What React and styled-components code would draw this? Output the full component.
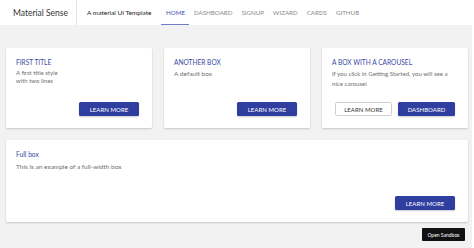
import React from "react";
import styled, { createGlobalStyle } from "styled-components";

const Global = createGlobalStyle`
  html, body { margin: 0; padding: 0; background: #ffffff; }
  body { font-family: Lato, "Open Sans", "Liberation Sans", sans-serif; -webkit-font-smoothing: antialiased; }
  * { box-sizing: border-box; }
`;

const Page = styled.div`
  width: 474px;
  height: 248px;
  display: flex;
  flex-direction: column;
  overflow: hidden;
`;

const Header = styled.header`
  height: 25px;
  flex: none;
  display: flex;
  align-items: stretch;
  background: #fff;
`;

const Brand = styled.div`
  width: 77px;
  padding-left: 13px;
  display: flex;
  align-items: center;
  border-right: 1px solid #e4e4e4;
  font-size: 8.5px;
  color: #333;
`;

const Subtitle = styled.div`
  margin-left: 10px;
  display: flex;
  align-items: center;
  font-size: 6.5px;
  color: #222;
`;

const Tabs = styled.nav`
  margin-left: 10px;
  display: flex;
  align-items: stretch;
`;

const Tab = styled.div`
  position: relative;
  padding: 0 4.5px;
  display: flex;
  align-items: center;
  font-size: 6.2px;
  color: ${(p) => (p.$active ? "#3f51b5" : "#8a8a8a")};
  &::after {
    content: "";
    display: ${(p) => (p.$active ? "block" : "none")};
    position: absolute;
    left: 0;
    right: 0;
    bottom: 0;
    height: 1.5px;
    background: #6f7cc9;
  }
`;

const Main = styled.main`
  flex: 1;
  margin-right: 2px;
  background: #f2f2f2;
  padding: 23px 4px 0 6px;
  position: relative;
`;

const Grid = styled.div`
  display: grid;
  grid-template-columns: repeat(3, 1fr);
  gap: 12px;
`;

const Card = styled.section`
  background: #fff;
  border-radius: 1.5px;
  box-shadow: 0 1px 2px rgba(0, 0, 0, 0.18), 0 0 1px rgba(0, 0, 0, 0.06);
  height: ${(p) => p.$h}px;
  padding: 10px 7px 12px 10px;
  display: flex;
  flex-direction: column;
`;

const FullCard = styled(Card)`
  margin-top: 12px;
`;

const Title = styled.h3`
  margin: 0;
  font-weight: 400;
  font-size: ${(p) => p.$size || 6.6}px;
  line-height: 9px;
  color: #3a4aa6;
  text-transform: ${(p) => (p.$plain ? "none" : "uppercase")};
`;

const Body = styled.p`
  margin: ${(p) => p.$mt || 2}px 0 0;
  max-width: ${(p) => (p.$max ? `${p.$max}px` : "none")};
  font-size: ${(p) => p.$size || 6.5}px;
  line-height: ${(p) => p.$lh || 9.5}px;
  color: #707070;
`;

const Actions = styled.div`
  margin-top: auto;
  padding-right: 6px;
  display: flex;
  justify-content: ${(p) => (p.$split ? "space-between" : "flex-end")};
  gap: 6px;
  padding-left: ${(p) => (p.$split ? 3 : 0)}px;
`;

const Button = styled.button`
  width: ${(p) => p.$w || 60}px;
  height: 14px;
  padding: 0;
  border-radius: 1.5px;
  font-family: inherit;
  font-size: 6px;
  letter-spacing: 0.05px;
  cursor: pointer;
  border: ${(p) => (p.$outline ? "0.5px solid #d0d0d0" : "none")};
  background: ${(p) => (p.$outline ? "#fff" : "#303f9f")};
  color: ${(p) => (p.$outline ? "#333" : "#fff")};
  box-shadow: ${(p) => (p.$outline ? "none" : "0 1px 1.5px rgba(0,0,0,0.2)")};
`;

const Sandbox = styled.div`
  position: absolute;
  right: 7px;
  bottom: 7px;
  width: 43px;
  height: 13px;
  background: #111;
  color: #fff;
  border-radius: 1px;
  font-size: 5px;
  display: flex;
  align-items: center;
  justify-content: center;
`;

export default function App() {
  const tabs = ["HOME", "DASHBOARD", "SIGNUP", "WIZARD", "CARDS", "GITHUB"];
  return (
    <>
      <Global />
      <Page>
        <Header>
          <Brand>Material Sense</Brand>
          <Subtitle>A material UI Template</Subtitle>
          <Tabs>
            {tabs.map((t, i) => (
              <Tab key={t} $active={i === 0}>{t}</Tab>
            ))}
          </Tabs>
        </Header>
        <Main>
          <Grid>
            <Card $h={80}>
              <Title>First title</Title>
              <Body $size={6} $lh={8} $mt={2}>A first title style<br />with two lines</Body>
              <Actions><Button>LEARN MORE</Button></Actions>
            </Card>
            <Card $h={80}>
              <Title>Another box</Title>
              <Body>A default box</Body>
              <Actions><Button>LEARN MORE</Button></Actions>
            </Card>
            <Card $h={80}>
              <Title>A box with a carousel</Title>
              <Body $size={6.1} $max={125}>If you click in Getting Started, you will see a nice carousel</Body>
              <Actions $split>
                <Button $outline $w={57}>LEARN MORE</Button>
                <Button $w={57}>DASHBOARD</Button>
              </Actions>
            </Card>
          </Grid>
          <FullCard $h={82}>
            <Title $plain $size={6.7}>Full box</Title>
            <Body $mt={3}>This is an example of a full-width box</Body>
            <Actions><Button>LEARN MORE</Button></Actions>
          </FullCard>
          <Sandbox>Open Sandbox</Sandbox>
        </Main>
      </Page>
    </>
  );
}
